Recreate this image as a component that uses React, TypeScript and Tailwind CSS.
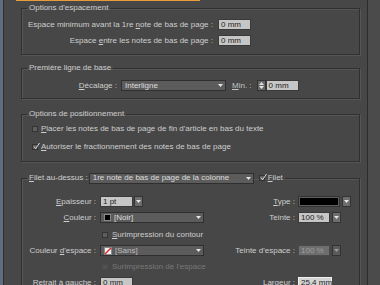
import type { ReactNode } from 'react'

function Key({ children }: { children: ReactNode }) {
  return <span className="underline underline-offset-[1px]">{children}</span>
}

function Arrow({ dim = false }: { dim?: boolean }) {
  return (
    <svg width="5" height="3" viewBox="0 0 5 3" className="block">
      <path d="M0 0h5L2.5 3z" fill={dim ? '#9a9a9a' : '#e6e6e6'} />
    </svg>
  )
}

function ArrowButton({ dim = false }: { dim?: boolean }) {
  return (
    <div
      className={`flex h-[11px] w-[9px] items-center justify-center border border-[#333] ${
        dim ? 'bg-[#5a5a5a]' : 'bg-[#6e6e6e]'
      }`}
    >
      <Arrow dim={dim} />
    </div>
  )
}

function Field({ value, width, focus = false }: { value: string; width: string; focus?: boolean }) {
  return (
    <div
      className={`flex h-[11px] items-center whitespace-nowrap border px-[2px] text-[#1e1e1e] ${width} ${
        focus ? 'border-[#f0f0f0] bg-[#d4d4d4]' : 'border-[#3a3a3a] bg-[#c6c6c6]'
      }`}
    >
      {value}
    </div>
  )
}

function Select({ children, width }: { children: ReactNode; width: string }) {
  return (
    <div
      className={`flex h-[11px] items-center justify-between border border-[#2f2f2f] bg-[#5c5c5c] pl-[3px] pr-[2px] text-[#dcdcdc] ${width}`}
    >
      <div className="flex items-center gap-[3px] whitespace-nowrap">{children}</div>
      <Arrow />
    </div>
  )
}

function Check({ checked = false, dim = false }: { checked?: boolean; dim?: boolean }) {
  return (
    <div
      className={`relative h-[6px] w-[6px] shrink-0 border ${
        dim ? 'border-[#4a4a4a] bg-[#525252]' : 'border-[#333] bg-[#5e5e5e]'
      }`}
    >
      {checked && (
        <svg width="8" height="8" viewBox="0 0 8 8" className="absolute -top-[3px] left-0">
          <path d="M1 4.5l1.6 2.2L6.5 1" stroke="#dcdcdc" strokeWidth="1" fill="none" />
        </svg>
      )}
    </div>
  )
}

function Box({ legend, className, children }: { legend: ReactNode; className: string; children: ReactNode }) {
  return (
    <fieldset
      className={`border border-[#303030] shadow-[inset_1px_1px_0_#565656,1px_1px_0_#565656] ${className}`}
    >
      <legend className="ml-[5px] px-[2px] leading-[10px] text-[#cdcdcd]">{legend}</legend>
      {children}
    </fieldset>
  )
}

export default function App() {
  return (
    <div className="flex h-[285px] w-[380px] overflow-hidden bg-[#474747] font-['Liberation_Sans',Arial,sans-serif] text-[8px] leading-[10px] text-[#cecece]">
      <div className="w-[3px] bg-[#5f6d80]" />
      <div className="w-px bg-[#2e2e2e]" />

      <main className="flex w-[363px] flex-col">
        <div className="ml-[12px] h-[3px] w-[184px] border-b border-[#e79b3a] bg-[#b8742a]" />

        <Box legend="Options d'espacement" className="ml-[17px] mr-[7px] mt-[2px] pb-[8px] pt-[6px]">
          <div className="flex flex-col gap-[5px] pl-[8px]">
            <div className="flex h-[11px] items-center">
              <span className="flex w-[183px] justify-end whitespace-nowrap">
                Espace minimum avant la 1re&nbsp;<Key>n</Key>ote de bas de page :
              </span>
              <div className="ml-[5px]">
                <Field value="0 mm" width="w-[33px]" />
              </div>
            </div>
            <div className="flex h-[11px] items-center">
              <span className="flex w-[183px] justify-end whitespace-nowrap">
                Espace&nbsp;<Key>e</Key>ntre les notes de bas de page :
              </span>
              <div className="ml-[5px]">
                <Field value="0 mm" width="w-[33px]" />
              </div>
            </div>
          </div>
        </Box>

        <Box legend="Première ligne de base" className="ml-[17px] mr-[7px] mt-[8px] pb-[7px] pt-[7px]">
          <div className="flex h-[11px] items-center">
            <span className="w-[95px] text-right">
              <Key>D</Key>écalage :
            </span>
            <div className="ml-[4px]">
              <Select width="w-[105px]">Interligne</Select>
            </div>
            <span className="ml-[6px] text-[#c4c4c4]">
              <Key>M</Key>in. :
            </span>
            <div className="ml-[5px] flex h-[11px] w-[9px] flex-col items-center justify-center gap-[1px] border border-[#333] bg-[#666]">
              <svg width="5" height="3" viewBox="0 0 5 3" className="block">
                <path d="M0 3h5L2.5 0z" fill="#e0e0e0" />
              </svg>
              <Arrow />
            </div>
            <Field value="0 mm" width="w-[33px]" />
          </div>
        </Box>

        <Box legend="Options de positionnement" className="ml-[17px] mr-[7px] mt-[10px] pb-[9px] pt-[5px]">
          <div className="flex flex-col gap-[8px] pl-[10px]">
            <div className="flex h-[10px] items-center gap-[3px] whitespace-nowrap">
              <Check />
              <span>
                <Key>P</Key>lacer les notes de bas de page de fin d'article en bas du texte
              </span>
            </div>
            <div className="flex h-[10px] items-center gap-[3px] whitespace-nowrap">
              <Check checked />
              <span>
                <Key>A</Key>utoriser le fractionnement des notes de bas de page
              </span>
            </div>
          </div>
        </Box>

        <Box
          legend={
            <span className="flex h-[12px] items-center">
              <span>
                <Key>F</Key>ilet au-dessus :
              </span>
              <span className="ml-[1px]">
                <Select width="w-[165px]">1re note de bas de page de la colonne</Select>
              </span>
              <span className="ml-[5px] flex items-center gap-[3px]">
                <Check checked />
                <span>
                  <Key>F</Key>ilet
                </span>
              </span>
            </span>
          }
          className="ml-[17px] mr-[7px] mt-[10px] flex-1 pt-[12px]"
        >
          <div className="flex flex-col whitespace-nowrap">
            <div className="flex h-[11px] items-center">
              <span className="w-[74px] text-right">
                <Key>E</Key>paisseur :
              </span>
              <div className="ml-[4px] flex w-[104px] items-center gap-[1px]">
                <Field value="1 pt" width="w-[33px]" />
                <ArrowButton />
              </div>
              <span className="w-[91px] text-right">
                <Key>T</Key>ype :
              </span>
              <div className="ml-[3px] flex items-center gap-[2px]">
                <div className="flex h-[11px] w-[42px] items-center border border-[#333] bg-[#5c5c5c] p-[1px]">
                  <div className="h-full w-full bg-black" />
                </div>
                <ArrowButton />
              </div>
            </div>

            <div className="mt-[5px] flex h-[11px] items-center">
              <span className="w-[74px] text-right">
                <Key>C</Key>ouleur :
              </span>
              <div className="ml-[4px]">
                <Select width="w-[104px]">
                  <span className="h-[7px] w-[7px] border border-[#888] bg-black" />
                  <span>[Noir]</span>
                </Select>
              </div>
              <span className="w-[91px] text-right">Teinte :</span>
              <div className="ml-[3px] flex items-center gap-[2px]">
                <Field value="100 %" width="w-[32px]" />
                <ArrowButton />
              </div>
            </div>

            <div className="mt-[6px] flex h-[11px] items-center pl-[80px]">
              <Check />
              <span className="ml-[4px]">
                <Key>S</Key>urimpression du contour
              </span>
            </div>

            <div className="mt-[5px] flex h-[11px] items-center">
              <span className="w-[74px] text-right">
                Couleur <Key>d</Key>'espace :
              </span>
              <div className="ml-[4px]">
                <Select width="w-[104px]">
                  <svg width="8" height="8" viewBox="0 0 8 8" className="block">
                    <rect x="0.5" y="0.5" width="7" height="7" fill="#f2f2f2" stroke="#888" />
                    <path d="M1 7L7 1" stroke="#e0262b" strokeWidth="1.4" />
                  </svg>
                  <span className="text-[#bdbdbd]">[Sans]</span>
                </Select>
              </div>
              <span className="w-[91px] text-right">Teinte d'espace :</span>
              <div className="ml-[3px] flex items-center gap-[2px]">
                <div className="flex h-[11px] w-[32px] items-center border border-[#4a4a4a] bg-[#6e6e6e] px-[2px] text-[#9e9e9e]">
                  100 %
                </div>
                <ArrowButton dim />
              </div>
            </div>

            <div className="mt-[5px] flex h-[11px] items-center pl-[80px] text-[#787878]">
              <Check dim />
              <span className="ml-[4px]">Surimpression de l'espace</span>
            </div>

            <div className="mt-[5px] flex h-[11px] items-center">
              <span className="w-[74px] text-right">Retrait à gauche :</span>
              <div className="ml-[4px] w-[104px]">
                <Field value="0 mm" width="w-[33px]" />
              </div>
              <span className="w-[91px] text-right">Largeur :</span>
              <div className="ml-[3px]">
                <Field value="25,4 mm" width="w-[34px]" focus />
              </div>
            </div>
          </div>
        </Box>
      </main>

      <div className="w-px bg-[#2c2c2c]" />
      <div className="flex-1 bg-[#4b4b4b]" />
    </div>
  )
}
